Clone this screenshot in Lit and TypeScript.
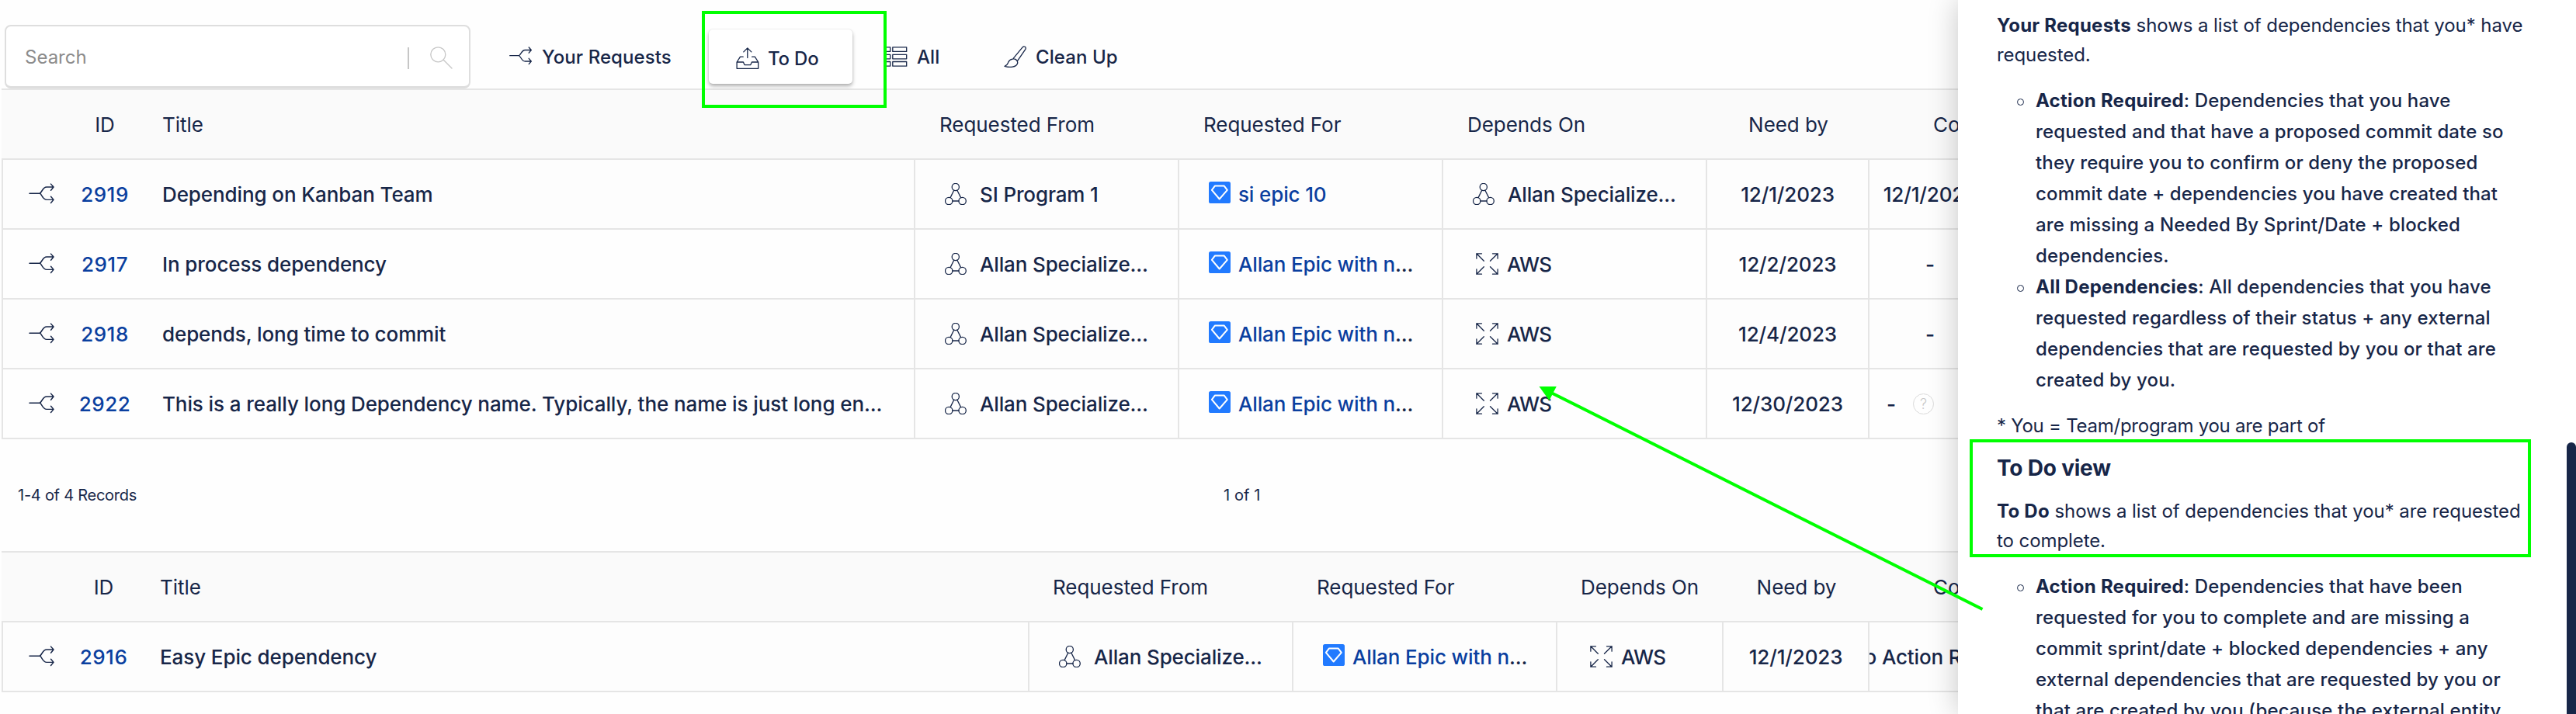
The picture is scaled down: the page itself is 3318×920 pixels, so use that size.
import { LitElement, html, css, svg, nothing, TemplateResult } from "lit";
import { customElement } from "lit/decorators.js";
import { classMap } from "lit/directives/class-map.js";

const line = (w: number, h: number, body: TemplateResult, width = w, height = h) => html`
  <svg width=${width} height=${height} viewBox="0 0 ${w} ${h}" fill="none" stroke="currentColor" stroke-width="1.3"
    stroke-linecap="round" stroke-linejoin="round">${body}</svg>`;

const branchShape = svg`<path d="M.7 11.7H12.6C15.2 10 16 4.5 20.3 4.5H28M25.2 1l3.1 3.5-3.1 3.7M12.6 11.7C15.2 13.4 16 19 20.3 19H28M25.2 15.3l3.1 3.7-3.1 3.6"/>`;
const branch = () => line(29, 24, branchShape);
const branchLarge = () => line(29, 24, branchShape, 33, 27);

const team = () => line(28, 28, svg`
  <circle cx="13.8" cy="5" r="4.6"/><circle cx="5.2" cy="23" r="4.7"/><circle cx="22.6" cy="23" r="4.7"/>
  <path d="M11.7 9.2L7.1 18.6M15.9 9.2l4.7 9.4M10 23h8"/>`);

const expand = () => line(29, 28, svg`
  <path d="M.9 7.2V.8h6.6M.9.8l9.4 9.4M21.5.8h6.6v6.4M28.1.8l-9.6 9.4M.9 20.8v6.4h6.6M.9 27.2l9.4-9.4M21.5 27.2h6.6v-6.4M28.1 27.2l-9.6-9.4"/>`);

const inbox = () => line(30, 28, svg`
  <path d="M14.8 13.4V.9M9.8 5.9l5-5 5 5M9.2 12.2H5.5L1.1 19v8.3h27.6V19l-4.4-6.8h-3.7M1.1 19h8.3l1.6 3.6h7.8l1.6-3.6h8.3"/>`);

const list = () => line(31, 27, svg`
  <path d="M1 .8h7.7v5.6H1zM11.8.8h17.9v5.6H11.8zM1 10.3h7.7v5.5H1zM11.8 10.3h17.9v5.5H11.8zM1 19.5h7.7v5.7H1zM11.8 19.5h17.9v5.7H11.8z"/>`);

const brush = () => line(30, 28, svg`
  <path d="M12.3 16.2L24.3 1.7c1.9-1.8 4.8-.1 3.6 2.6L17.4 19.6M11 17.1c3.6-.9 7.4 1.8 6.6 5.4-1.2 5.2-10.4 6-16.6 3.9 3.6-1 3.6-2.5 4.8-5.4.9-2.2 2.8-3.5 5.2-3.9z"/>`);

const magnifier = () => line(29, 29, svg`<circle cx="10.3" cy="10.3" r="9.5"/><path d="M17.3 17.3L28 28"/>`);

const epic = () => html`
  <svg class="epic" width="28" height="28" viewBox="0 0 28 28">
    <rect width="28" height="28" rx="2.6" fill="#217aff"/>
    <path d="M7.8 5.6h12l4 5.2-10.1 11.7L3.9 10.8z" fill="none" stroke="#fff" stroke-width="2" stroke-linejoin="round"/>
  </svg>`;

interface Dependency {
  id: string;
  title: string;
  from: string;
  epic: string;
  cut?: boolean;
  target: string;
  external?: boolean;
  need: string;
  commit: string;
  help?: boolean;
}

const incoming: Dependency[] = [
  { id: "2919", title: "Depending on Kanban Team", from: "SI Program 1", epic: "si epic 10", target: "Allan Specialize...", need: "12/1/2023", commit: "12/1/2023" },
  { id: "2917", title: "In process dependency", from: "Allan Specialize...", epic: "Allan Epic with n", cut: true, target: "AWS", external: true, need: "12/2/2023", commit: "-" },
  { id: "2918", title: "depends, long time to commit", from: "Allan Specialize...", epic: "Allan Epic with n", cut: true, target: "AWS", external: true, need: "12/4/2023", commit: "-" },
  { id: "2922", title: "This is a really long Dependency name. Typically, the name is just long en...", from: "Allan Specialize...", epic: "Allan Epic with n", cut: true, target: "AWS", external: true, need: "12/30/2023", commit: "-", help: true },
];

const outgoing: Dependency[] = [
  { id: "2916", title: "Easy Epic dependency", from: "Allan Specialize...", epic: "Allan Epic with n", cut: true, target: "AWS", external: true, need: "12/1/2023", commit: "No Action R" },
];

@customElement("app-root")
export class AppRoot extends LitElement {
  static styles = css`
    :host {
      display: flex;
      position: relative;
      width: 3318px;
      height: 920px;
      overflow: hidden;
      background: #fefefe;
      color: #172648;
      font-family: Inter, "Liberation Sans", sans-serif;
      font-size: 26px;
      white-space: nowrap;
    }
    svg { display: block; flex: none; }
    .main { width: 2522px; overflow: hidden; flex: none; }
    .toolbar { display: flex; height: 114px; box-sizing: border-box; padding: 32px 0 0 6px; font-size: 24px; font-weight: 500; }
    .search {
      display: flex; align-items: center; box-sizing: border-box; width: 600px; height: 82px;
      border: 2px solid #dedede; border-bottom-width: 3px; border-radius: 8px; padding: 0 21px 0 24px;
      background: #fff; color: #8c8c8c; font-weight: 400; margin-right: 50px; flex: none;
    }
    .search .label { flex: 1; padding-top: 2px; }
    .search .bar { width: 2px; height: 28px; background: #c6c6c6; margin: 4px 27px 0 0; }
    .search svg { color: #c6c6c6; margin-top: 4px; }
    .tab { display: flex; align-items: center; height: 82px; flex: none; box-sizing: border-box; letter-spacing: .08px; }
    .tab span { padding-top: 1px; }
    .requests { width: 257px; gap: 13px; }
    .requests svg { margin-top: -3px; }
    .todo {
      width: 185px; height: 70px; margin-top: 6px; padding: 3px 0 0 35px; gap: 11px; background: #fff;
      border-radius: 5px; box-shadow: 0 3px 5px rgba(0, 0, 0, .3), 0 0 2px rgba(0, 0, 0, .12); letter-spacing: -.2px;
    }
    .all { width: 155px; margin-left: 40px; gap: 12px; }
    .clean { gap: 11px; }

    .table { border-top: 2px solid #e5e5e5; margin-left: 2px; width: 2580px; }
    .row {
      display: grid; height: 88px; border-bottom: 2px solid #e5e5e5; border-left: 2px solid #e5e5e5; font-weight: 500;
    }
    .table.first .row { grid-template-columns: 94px 74px 1007px 340px 340px 340px 209px 156px; }
    .table.second .row { grid-template-columns: 94px 71px 1157px 340px 340px 214px 188px 156px; }
    .row.head { border-left: 0; padding-left: 2px; background: #fafafa; font-weight: 400; background-clip: padding-box; }
    .row.odd { background: #fdfdfd; }
    .cell { display: flex; align-items: center; box-sizing: border-box; overflow: hidden; letter-spacing: -.14px; }
    .row:not(.head) .ruled { border-right: 2px solid #e5e5e5; }
    .sym { padding-left: 33px; padding-bottom: 1px; }
    .mid { justify-content: center; }
    .cell.title { padding-left: 37px; letter-spacing: -.1px; }
    .head .cell { letter-spacing: -.05px; }
    .head .from, .head .for, .head .dep { padding-left: 31px; }
    .table.second .head .from, .table.second .head .for, .table.second .head .dep { padding-left: 30px; }
    .from, .for, .dep { padding-left: 38px; gap: 17px; }
    .row .for { gap: 10px; }
    .row .ext { padding-left: 42px; gap: 11px; }
    .ext .name { letter-spacing: -.8px; }
    .cell.id { color: #0a3f9f; letter-spacing: .5px; }
    .for a { color: #0a3f9f; }
    .epic { margin-bottom: 5px; }
    .head .commit { padding-left: 82px; }
    .commit.help { justify-content: flex-start; padding-left: 22px; gap: 22px; }
    .commit.status { justify-content: flex-start; }
    .status .name { margin-left: -26px; }
    .round {
      display: flex; align-items: center; justify-content: center; box-sizing: border-box; width: 27px; height: 27px;
      border: 1.5px solid #dadada; border-radius: 50%; color: #c8c8c8; font-size: 18px; font-weight: 300;
    }
    .pager { display: grid; grid-template-columns: 1576px 1fr; align-items: center; height: 144px; font-size: 20px; }
    .pager .count { padding-left: 23px; letter-spacing: -.25px; }
    .pager .page { letter-spacing: .1px; }

    .panel {
      position: relative; width: 796px; height: 920px; box-sizing: border-box; padding: 14px 0 0 50px; background: #fff;
      box-shadow: 0 0 36px rgba(0, 0, 0, .22); font-size: 24px; flex: none;
    }
    p { margin: 0; line-height: 38px; letter-spacing: -.08px; }
    b { font-weight: 700; letter-spacing: .25px; }
    ul { margin: 20px 0; padding: 0 0 0 50px; list-style: none; line-height: 40px; font-weight: 500; letter-spacing: .14px; }
    li { position: relative; }
    li::before {
      content: ""; position: absolute; left: -24px; top: 17px; width: 7px; height: 7px; border: 1.4px solid #172648; border-radius: 50%;
    }
    .note { letter-spacing: -.25px; }
    h3 { margin: 18px 0 20px; font-size: 28px; line-height: 34px; font-weight: 700; letter-spacing: -.2px; }
    .thumb { position: absolute; right: 0; top: 570px; width: 12px; height: 400px; border-radius: 6px; background: #172648; }
    .mark { position: absolute; box-sizing: border-box; border: 4px solid #0f0; }
    .mark.tab-mark { left: 904px; top: 14px; width: 238px; height: 125px; }
    .mark.text-mark { left: 2537px; top: 566px; width: 723px; height: 152px; }
    .arrow { position: absolute; left: 1970px; top: 490px; }
  `;

  private head() {
    return html`<div class="row head">
      <div class="cell"></div>
      <div class="cell mid">ID</div>
      <div class="cell title">Title</div>
      <div class="cell from">Requested From</div>
      <div class="cell for">Requested For</div>
      <div class="cell dep">Depends On</div>
      <div class="cell mid">Need by</div>
      <div class="cell commit">Co</div>
    </div>`;
  }

  private row(d: Dependency, i: number) {
    const commit = { cell: true, mid: true, commit: true, help: !!d.help, status: d.commit.length > 9 };
    return html`<div class=${classMap({ row: true, odd: i % 2 === 0 })}>
      <div class="cell sym">${branchLarge()}</div>
      <div class="cell mid id">${d.id}</div>
      <div class="cell title ruled">${d.title}</div>
      <div class="cell from ruled">${team()}<span>${d.from}</span></div>
      <div class="cell for ruled">${epic()}<span><a>${d.epic}</a>${d.cut ? "..." : nothing}</span></div>
      <div class=${classMap({ cell: true, dep: true, ruled: true, ext: !!d.external })}>
        ${d.external ? expand() : team()}<span class="name">${d.target}</span>
      </div>
      <div class="cell mid ruled">${d.need}</div>
      <div class=${classMap(commit)}><span class="name">${d.commit}</span>${d.help ? html`<span class="round">?</span>` : nothing}</div>
    </div>`;
  }

  render() {
    return html`
      <div class="main">
        <div class="toolbar">
          <div class="search"><span class="label">Search</span><span class="bar"></span>${magnifier()}</div>
          <div class="tab requests">${branch()}<span>Your Requests</span></div>
          <div class="tab todo">${inbox()}<span>To Do</span></div>
          <div class="tab all">${list()}<span>All</span></div>
          <div class="tab clean">${brush()}<span>Clean Up</span></div>
        </div>
        <div class="table first">${this.head()}${incoming.map((d, i) => this.row(d, i))}</div>
        <div class="pager"><span class="count">1-4 of 4 Records</span><span class="page">1 of 1</span></div>
        <div class="table second">${this.head()}${outgoing.map((d, i) => this.row(d, i))}</div>
      </div>
      <div class="panel">
        <p><b>Your Requests</b> shows a list of dependencies that you* have<br>requested.</p>
        <ul>
          <li><b>Action Required</b>: Dependencies that you have<br>requested and that have a proposed commit date so<br>they require you to confirm or deny the proposed<br>commit date + dependencies you have created that<br>are missing a Needed By Sprint/Date + blocked<br>dependencies.</li>
          <li><b>All Dependencies</b>: All dependencies that you have<br>requested regardless of their status + any external<br>dependencies that are requested by you or that are<br>created by you.</li>
        </ul>
        <p class="note">* You = Team/program you are part of</p>
        <h3>To Do view</h3>
        <p><b>To Do</b> shows a list of dependencies that you* are requested<br>to complete.</p>
        <ul>
          <li><b>Action Required</b>: Dependencies that have been<br>requested for you to complete and are missing a<br>commit sprint/date + blocked dependencies + any<br>external dependencies that are requested by you or<br>that are created by you (because the external entity</li>
        </ul>
        <div class="thumb"></div>
      </div>
      <div class="mark tab-mark"></div>
      <div class="mark text-mark"></div>
      <svg class="arrow" width="600" height="310" viewBox="0 0 600 310">
        <path d="M24 14L583.5 295" stroke="#0f0" stroke-width="4" fill="none"/>
        <path d="M12.5 8H34.8L25.5 26z" fill="#0f0"/>
      </svg>`;
  }
}
